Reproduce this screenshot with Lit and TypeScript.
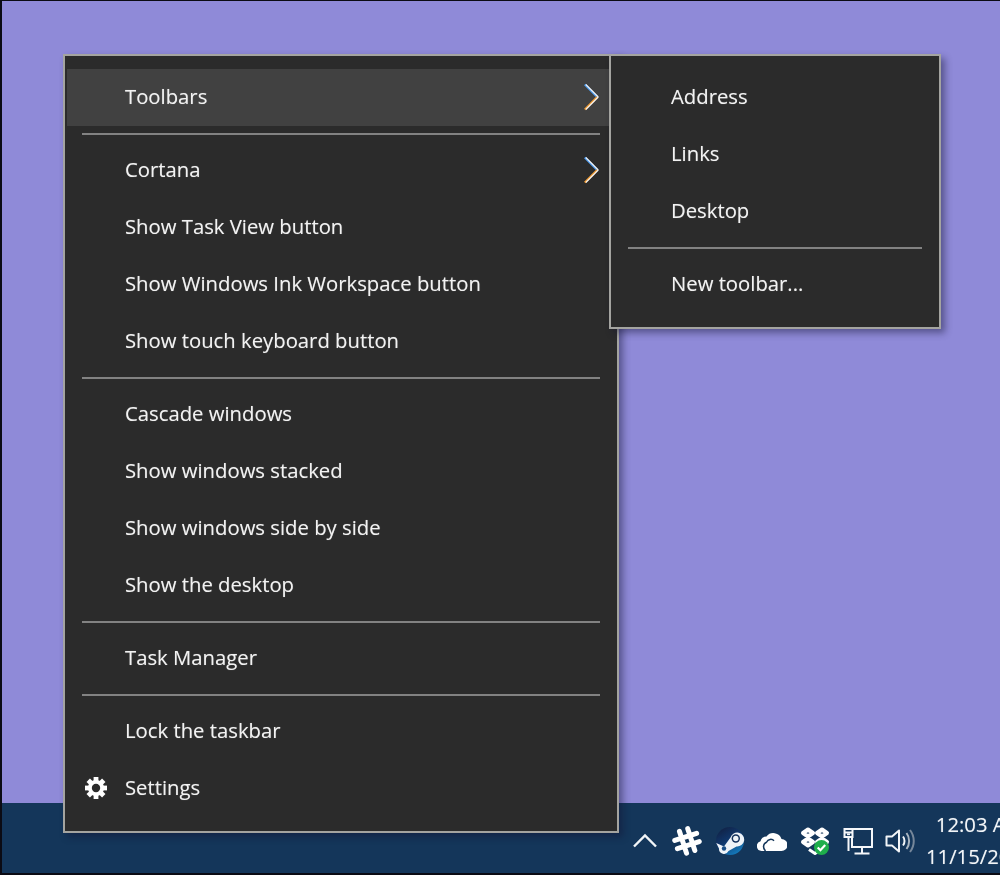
import { LitElement, html, css, svg } from "lit";
import { customElement } from "lit/decorators.js";

type Row = { label: string; arrow?: boolean; active?: boolean; gear?: boolean } | "sep";

const MAIN: Row[] = [
  { label: "Toolbars", arrow: true, active: true },
  "sep",
  { label: "Cortana", arrow: true },
  { label: "Show Task View button" },
  { label: "Show Windows Ink Workspace button" },
  { label: "Show touch keyboard button" },
  "sep",
  { label: "Cascade windows" },
  { label: "Show windows stacked" },
  { label: "Show windows side by side" },
  { label: "Show the desktop" },
  "sep",
  { label: "Task Manager" },
  "sep",
  { label: "Lock the taskbar" },
  { label: "Settings", gear: true },
];

const SUB: Row[] = [
  { label: "Address" },
  { label: "Links" },
  { label: "Desktop" },
  "sep",
  { label: "New toolbar..." },
];

const arrowIcon = html`<svg class="arrow" width="18" height="28" viewBox="0 0 18 28" fill="none">
  <path d="M1.8 1.5 14.2 14" stroke="#4f9df0" stroke-width="2" />
  <path d="M2.9 1.5 15.3 14" stroke="#f6f6f6" stroke-width="1.1" />
  <path d="M1.8 26.5 14.2 14" stroke="#f09a30" stroke-width="2" />
  <path d="M2.9 26.5 15.3 14" stroke="#f6f6f6" stroke-width="1.1" />
</svg>`;

const gearIcon = html`<svg class="gear" width="24" height="24" viewBox="0 0 24 24">
  <g fill="#fff">
    <circle cx="12" cy="12" r="8" />
    ${[0, 45, 90, 135, 180, 225, 270, 315].map(
      (a) => svg`<rect x="9.6" y="1" width="4.8" height="5" transform="rotate(${a} 12 12)" />`
    )}
  </g>
  <circle cx="12" cy="12" r="4.2" fill="#2b2b2b" />
</svg>`;

const trayIcons = [
  svg`<path d="M5 20.5 16 9.5 27 20.5" fill="none" stroke="#f2f5f8" stroke-width="2.4" />`,
  svg`<g transform="rotate(-18 15 15)" stroke="#fff" stroke-width="5" stroke-linecap="round" fill="none">
    <path d="M10.8 3.5v23M19.5 3.5v23M3.5 10.7h23M3.5 19.3h23" /></g>`,
  svg`<defs><linearGradient id="st" x1="0" y1="0" x2="0.6" y2="1">
      <stop offset="0" stop-color="#111d3c" /><stop offset="0.55" stop-color="#10386e" /><stop offset="1" stop-color="#1477b8" />
    </linearGradient></defs>
    <circle cx="15" cy="15" r="14" fill="url(#st)" />
    <path d="M1.2 17 9 20.4 15.5 11.5A7 7 0 1 1 21.5 20.5L13.5 25A5 5 0 0 1 4 22.6Z" fill="#eef3f8" />
    <circle cx="20.8" cy="12.5" r="4.2" fill="#12305c" />
    <circle cx="20.8" cy="12.5" r="2.7" fill="#eef3f8" />
    <circle cx="9" cy="22.5" r="2.2" fill="#1a4f88" />`,
  svg`<path d="M4.5 25A5 5 0 0 1 3.5 15.2 6.4 6.4 0 0 1 9.5 10.5 8.6 8.6 0 0 1 24.5 13 6 6 0 0 1 24.5 25Z" fill="#fff" />
    <path d="M8.5 25C5.5 22 6 17.5 9.5 16.2 11 13 15 12.5 17 14.8" fill="none" stroke="#14365a" stroke-width="1.5" />`,
  svg`<g fill="none" stroke="#fff" stroke-linejoin="round">
      <path d="M8 3.5 13 7 8 10.5 3 7ZM22 3.5 27 7 22 10.5 17 7ZM8 12.5 13 16 8 19.5 3 16ZM22 12.5 27 16 22 19.5 17 16Z" stroke-width="4" />
      <path d="M9 23.5 15 27.5 20 24" stroke-width="3" />
    </g>
    <circle cx="21.5" cy="21.5" r="7.5" fill="#1fae4b" />
    <path d="M17.7 21.5 20.4 24.2 25.2 19" fill="none" stroke="#fff" stroke-width="2.2" />`,
  svg`<g fill="none" stroke="#f5f7fa" stroke-width="2">
      <path d="M10 3H29V21H9V11" />
      <path d="M1.5 3H9.5V11H1.5ZM5.5 11V25M19 21V27M11.5 27.5H26.5" />
      <path d="M1.5 6.5H9.5" />
    </g><rect x="4" y="7.4" width="3" height="1.8" fill="#f5f7fa" />`,
  svg`<g fill="none" stroke-width="2">
      <path d="M1.5 10.5H7L14 4.5V25.5L7 19.5H1.5Z" stroke="#f2f5f8" stroke-linejoin="round" />
      <path d="M18 10.5C20 13 20 17 18 19.5" stroke="#f2f5f8" />
      <path d="M21.5 7C25 11.5 25 18.5 21.5 23" stroke="#aab6c2" />
      <path d="M25 4C30 10.5 30 19.5 25 26" stroke="#76879a" />
    </g>`,
];

@customElement("context-menu")
class ContextMenu extends LitElement {
  static properties = { rows: { attribute: false } };
  rows: Row[] = [];

  static styles = css`
    :host {
      display: block;
      box-sizing: border-box;
      background: #2b2b2b;
      border: 2px solid #a4a4a0;
      box-shadow: 4px 4px 7px rgba(20, 20, 50, 0.45);
      padding: 13px 0 14px 2px;
    }
    .row {
      display: flex;
      align-items: center;
      height: 57px;
      position: relative;
      color: #f2f2f2;
      font: 20.3px "Open Sans", sans-serif;
      white-space: nowrap;
      text-shadow: 0 0 1px rgba(255, 255, 255, 0.4);
    }
    .row.active {
      background: #414141;
    }
    .label {
      padding-left: var(--label-inset, 58px);
      padding-bottom: 3px;
    }
    .gear {
      position: absolute;
      left: 17px;
      top: 16px;
    }
    .arrow {
      position: absolute;
      right: var(--arrow-right, 16px);
      top: 14px;
    }
    .sep {
      height: 2px;
      margin: 7px var(--sep-right, 17px) 7px var(--sep-left, 15px);
      background: #828282;
    }
  `;

  render() {
    return this.rows.map((r) =>
      r === "sep"
        ? html`<div class="sep"></div>`
        : html`<div class="row ${r.active ? "active" : ""}">
            ${r.gear ? gearIcon : ""}
            <span class="label">${r.label}</span>
            ${r.arrow ? arrowIcon : ""}
          </div>`
    );
  }
}

@customElement("app-root")
class AppRoot extends LitElement {
  static styles = css`
    :host {
      display: block;
    }
    .screen {
      position: relative;
      box-sizing: border-box;
      width: 1000px;
      height: 875px;
      overflow: hidden;
      display: flex;
      flex-direction: column;
      background: #8f8ad8;
      border: solid #0b0b14;
      border-width: 1px 0 2px 2px;
      filter: blur(0.45px);
    }
    .desktop {
      flex: 1;
    }
    .taskbar {
      height: 70px;
      flex: none;
      background: #14365a;
      display: flex;
      align-items: center;
      padding-left: 621px;
      padding-top: 6px;
      box-sizing: border-box;
    }
    .slot {
      width: 42.7px;
      flex: none;
      display: flex;
      justify-content: center;
    }
    .clock {
      width: 116px;
      flex: none;
      margin-top: -2px;
      color: #f2f5f8;
      font: 20.3px/32px "Open Sans", sans-serif;
      text-align: center;
      white-space: nowrap;
      text-shadow: 0 0 1px rgba(255, 255, 255, 0.4);
    }
    .main {
      position: absolute;
      left: 61px;
      top: 53px;
      width: 556px;
    }
    .sub {
      position: absolute;
      left: 607px;
      top: 53px;
      width: 332px;
      --sep-left: 15px;
      --sep-right: 17px;
    }
  `;

  render() {
    return html`<div class="screen">
      <div class="desktop"></div>
      <div class="taskbar">
        ${trayIcons.map(
          (icon) => html`<div class="slot"><svg width="30" height="30" viewBox="0 0 30 30">${icon}</svg></div>`
        )}
        <div class="clock">12:03 AM<br />11/15/2017</div>
      </div>
      <context-menu class="main" .rows=${MAIN}></context-menu>
      <context-menu class="sub" .rows=${SUB}></context-menu>
    </div>`;
  }
}
